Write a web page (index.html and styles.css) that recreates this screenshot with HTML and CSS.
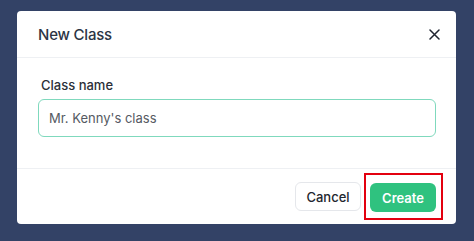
FILE: index.html
```html
<!DOCTYPE html>
<html lang="en">
<head>
    <meta charset="UTF-8">
    <meta name="viewport" content="width=device-width, initial-scale=1.0">
    <title>New Class</title>
    <link rel="stylesheet" href="styles.css">
</head>
<body>
<div class="modal">
    <div class="modal-header">
        <h2>New Class</h2>
        <button class="close" aria-label="Close">
            <svg width="11" height="11" viewBox="0 0 11 11">
                <path d="M1 1 L10 10 M10 1 L1 10" stroke="#1f2430" stroke-width="1.5" stroke-linecap="round"/>
            </svg>
        </button>
    </div>

    <div class="modal-body">
        <label for="class-name">Class name</label>
        <input id="class-name" type="text" value="Mr. Kenny's class">
    </div>

    <div class="modal-footer">
        <button class="btn btn-cancel">Cancel</button>
        <div class="highlight">
            <button class="btn btn-create">Create</button>
        </div>
    </div>
</div>
</body>
</html>
```

FILE: styles.css
```css
body {
    margin: 0;
    width: 474px;
    height: 241px;
    background-color: #334266;
    font-family: Inter, "Open Sans", sans-serif;
    padding: 11px 18px 0 17px;
    box-sizing: border-box;
}

.modal {
    background-color: #fff;
    border-radius: 4px;
    height: 213px;
    display: flex;
    flex-direction: column;
}

.modal-header {
    height: 46px;
    border-bottom: 1px solid #eef0f3;
    display: flex;
    align-items: center;
    justify-content: space-between;
    padding: 0 16px 0 21px;
}

.modal-header h2 {
    margin: 0;
    font-size: 15px;
    font-weight: 500;
    color: #2b3444;
    letter-spacing: -0.2px;
}

.close {
    background: none;
    border: none;
    padding: 0;
    display: flex;
}

.modal-body {
    padding: 19px 20px 0 21px;
    height: 111px;
    box-sizing: border-box;
    border-bottom: 1px solid #eef0f3;
}

.modal-body label {
    display: block;
    font-size: 13px;
    font-weight: 500;
    color: #2b2f38;
    margin: 0 0 6px 3px;
}

.modal-body input {
    width: 100%;
    height: 38px;
    box-sizing: border-box;
    border: 1px solid #7fd9bd;
    border-radius: 6px;
    padding: 0 10px;
    font-family: inherit;
    font-size: 13px;
    color: #555a63;
    outline: none;
}

.modal-footer {
    flex: 1;
    display: flex;
    align-items: center;
    justify-content: flex-end;
    padding: 0 13px 0 0;
    gap: 3px;
}

.btn {
    height: 29px;
    border-radius: 6px;
    font-family: inherit;
    font-size: 13px;
    font-weight: 500;
    padding: 0;
    width: 66px;
}

.btn-cancel {
    background: #fff;
    border: 1px solid #e5e7eb;
    color: #22262e;
}

.highlight {
    border: 2px solid #e3000f;
    padding: 8px 5px 6px 4px;
    display: flex;
}

.btn-create {
    background-color: #2fc27f;
    border: none;
    color: #fff;
    font-weight: 600;
}
```
